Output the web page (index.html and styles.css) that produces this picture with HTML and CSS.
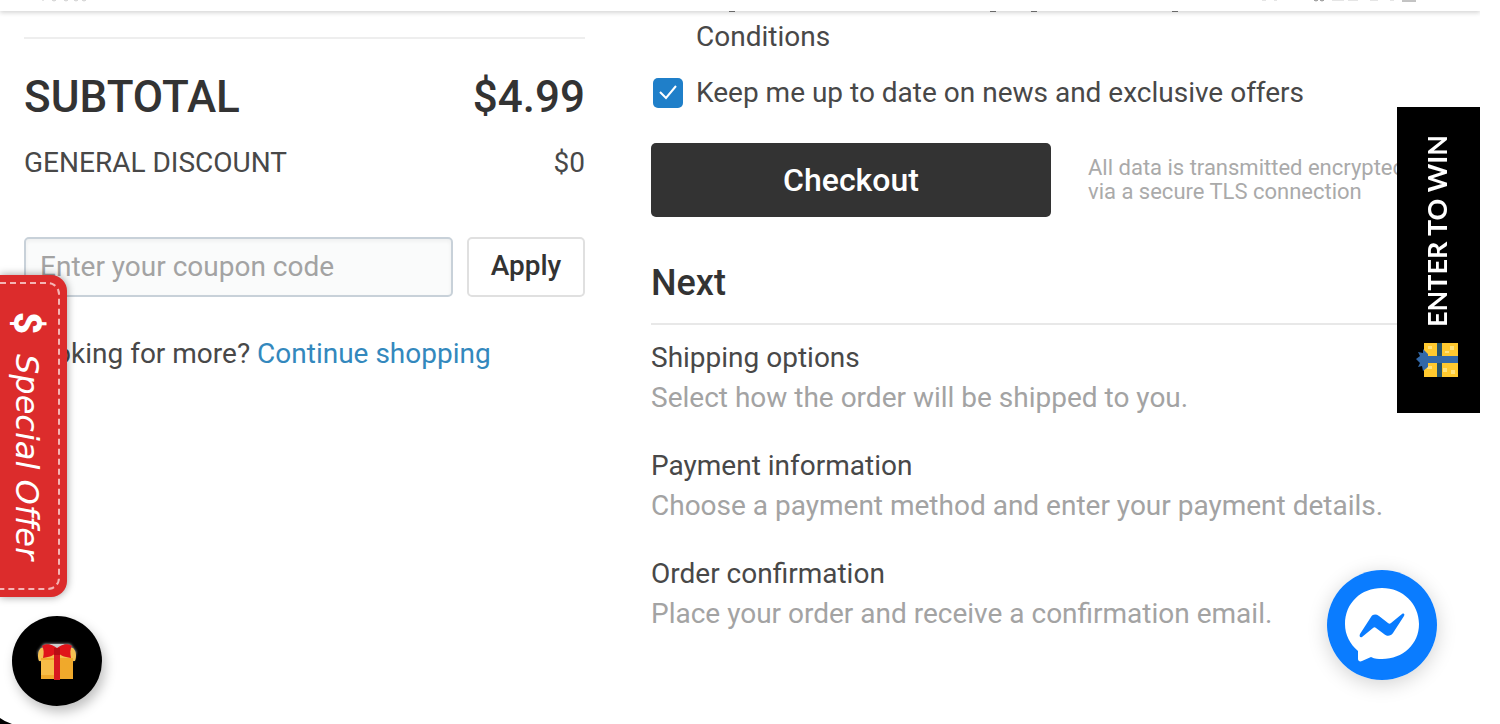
FILE: index.html
```
<!DOCTYPE html>
<html lang="en">
<head>
<meta charset="utf-8">
<meta name="viewport" content="width=device-width, initial-scale=1">
<title>Checkout</title>
<link rel="stylesheet" href="styles.css">
</head>
<body>
<header class="status-bar">
  <svg class="status-left" width="60" height="3" viewBox="0 0 60 3" aria-hidden="true"><path d="M2 0h2M12 0l2 1 2-1M24 0l2 1 2-1M34 0l2 1 2-1M42 0l2 1 2-1" fill="none" stroke="#ccc"/></svg>
  <svg class="status-right" width="196" height="3" viewBox="0 0 196 3" aria-hidden="true"><path d="M2 0h4M14 0h3M72 0h12M88 0h10M110 0h8M130 0h4" fill="none" stroke="#ccc"/><path d="M54 0l2 1 2-1M60 0l2 1 2-1M142 1h14" stroke="#888" fill="none"/></svg>
</header>
<main class="checkout">
  <section class="summary">
    <dl class="totals">
      <div class="total-row subtotal"><dt>SUBTOTAL</dt><dd>$4.99</dd></div>
      <div class="total-row"><dt>GENERAL DISCOUNT</dt><dd>$0</dd></div>
    </dl>
    <form class="coupon">
      <input class="coupon-input" type="text" placeholder="Enter your coupon code" aria-label="Coupon code">
      <button class="apply" type="button">Apply</button>
    </form>
    <p class="more">Looking for more? <a href="#">Continue shopping</a></p>
  </section>
  <section class="actions">
    <svg class="descenders" width="490" height="2" viewBox="0 0 490 2" aria-hidden="true"><path d="M33 0h6M294 0h6M335 0h6M476 0h6" stroke="#777" stroke-width="2" fill="none"/></svg>
    <p class="terms">Conditions</p>
    <label class="news"><input class="news-box" type="checkbox" checked><span>Keep me up to date on news and exclusive offers</span></label>
    <div class="submit">
      <button class="checkout-button" type="button">Checkout</button>
      <p class="secure">All data is transmitted encrypted via a secure TLS connection</p>
    </div>
    <h2 class="next">Next</h2>
    <ul class="steps">
      <li><h3>Shipping options</h3><p>Select how the order will be shipped to you.</p></li>
      <li><h3>Payment information</h3><p>Choose a payment method and enter your payment details.</p></li>
      <li><h3>Order confirmation</h3><p>Place your order and receive a confirmation email.</p></li>
    </ul>
  </section>
</main>
<button class="special" type="button"><span class="special-inner"><b class="dollar">$</b><span>Special Offer</span></span></button>
<button class="gift" type="button" aria-label="Rewards">
  <svg width="42" height="42" viewBox="0 0 42 42"><defs><filter id="soft" x="-30%" y="-30%" width="160%" height="160%"><feGaussianBlur stdDeviation="1.5"/></filter></defs>
  <path d="M8 4h26l6 8-3 9H5l-3-9z" fill="#eee" filter="url(#soft)" opacity=".8"/>
  <path d="M5 8h32c3 3 4 8 2 13H3C1 16 2 11 5 8z" fill="#f4c152"/><path d="M5 18h32v21H5z" fill="#f0a92b"/><path d="M5 20h15v15H5z" fill="#f8bd47"/><path d="M13 4h16l-8 5z" fill="#ccc"/>
  <path d="M18 9h6v31h-6z" fill="#d81920"/><path d="M21 8C16 4 10 3 6 6c2 3 2 7 1 12 7-1 12-3 14-7 2 4 7 6 14 7-1-5-1-9 1-12-4-3-10-2-15 2z" fill="#e0141a"/><path d="M18 8h6v7h-6z" fill="#b90e14"/></svg>
</button>
<button class="win" type="button">
  <span class="win-text">ENTER TO WIN</span>
  <svg width="42" height="34" viewBox="0 0 42 34" aria-hidden="true"><path d="M8 0h34v34H8z" fill="#ffc92f"/><path d="M12 3h4v3h-4zM11 23h5v3h-5zM27 25h4v4h-4zM34 3h4v4h-4zM29 8h4v2h-4zM35 27h4v4h-4z" fill="#ffe27c"/><path d="M21 0h5v34h-5z" fill="#28556b"/><path d="M9 13h33v7H9zM0 16l4-3-2-4 5 1V6l5 5v13l-5 4-1-5-4 1 2-4z" fill="#3268a8"/></svg>
</button>
<button class="messenger" type="button" aria-label="Messenger">
  <svg width="110" height="110" viewBox="0 0 110 110"><circle cx="55" cy="55" r="55" fill="#0a7cff"/><path d="M55 18c-21 0-37 15-37 36 0 11 5 20 13 27v8c0 2 2 3 4 2l9-4c4 2 7 2 11 2 21 0 37-15 37-35S76 18 55 18z" fill="#fff"/><path d="M33 64l11-17c2-3 5-3 8-1l9 7c1 1 2 1 3 0l11-9c2-1 3 0 2 2L66 63c-2 3-6 4-9 1l-8-6c-1-1-2-1-3 0l-11 9c-2 1-3-1-2-3z" fill="#0a7cff"/></svg>
</button>
<span class="corner"></span>
</body>
</html>
```
FILE: styles.css
```
* { box-sizing: border-box; }
body {
  margin: 0;
  padding-right: 20px;
  min-height: 100vh;
  position: relative;
  overflow: hidden;
  background: #fff;
  color: #484848;
  font: 28px/40px Roboto, "Liberation Sans", sans-serif;
}
h2, h3, p, dl, dd, ul { margin: 0; padding: 0; }
ul { list-style: none; }
button { font: inherit; cursor: pointer; }
.status-bar {
  display: flex;
  justify-content: space-between;
  height: 11px;
  padding: 0 24px 0 40px;
  box-shadow: 0 2px 4px rgba(0, 0, 0, .16);
  clip-path: inset(0 0 -12px 0);
}
.checkout {
  display: grid;
  grid-template-columns: 561fr 829fr;
  column-gap: 66px;
  padding-left: 24px;
}
.summary { padding-top: 26px; }
.totals { border-top: 2px solid #eee; padding-top: 32px; }
.total-row { display: flex; justify-content: space-between; }
.subtotal {
  font-size: 44px;
  line-height: 52px;
  font-weight: 500;
  color: #333;
  margin-bottom: 20px;
}
.coupon { display: flex; gap: 14px; margin-top: 54px; }
.coupon-input {
  flex: 1;
  min-width: 0;
  height: 60px;
  padding: 0 14px 2px;
  font: inherit;
  border: 2px solid #c8d1d9;
  border-radius: 5px;
  background: #fafbfb;
  box-shadow: inset 0 2px 4px rgba(0, 0, 0, .05);
}
.coupon-input::placeholder { color: #a3a3a3; opacity: 1; }
.apply {
  width: 118px;
  border: 2px solid #e0e0e0;
  border-radius: 5px;
  background: #fff;
  color: #333;
  font-weight: 500;
  padding: 0 0 2px;
}
.more { margin-top: 37px; }
.more a { color: #3388bd; text-decoration: none; }
.descenders { display: block; margin-left: 45px; }
.terms { margin: 4px 0 16px 45px; }
.news { display: flex; align-items: center; gap: 13px; margin-left: 2px; }
.news-box {
  appearance: none;
  width: 30px;
  height: 30px;
  margin: 0;
  border-radius: 5px;
  background: #1f7fc9 url("data:image/svg+xml,%3Csvg xmlns='http://www.w3.org/2000/svg' viewBox='0 0 30 30'%3E%3Cpath d='M7 14l6 6L23 8' fill='none' stroke='white' stroke-width='2'/%3E%3C/svg%3E") center / contain;
}
.submit { display: flex; align-items: center; gap: 37px; margin-top: 30px; }
.checkout-button {
  width: 400px;
  height: 74px;
  flex: none;
  border: 0;
  border-radius: 5px;
  background: #333;
  color: #fff;
  font-size: 32px;
  font-weight: 500;
}
.secure { width: 320px; font-size: 22px; line-height: 24px; color: #aaa; }
.next {
  margin-top: 44px;
  padding-bottom: 18px;
  border-bottom: 2px solid #e8e8e8;
  font-size: 36px;
  line-height: 44px;
  font-weight: 500;
  color: #333;
}
.steps { display: grid; gap: 28px; padding-top: 13px; }
.steps h3 { font-size: inherit; font-weight: 400; }
.steps p { color: #a3a3a3; }
.special {
  position: absolute;
  left: 0;
  top: 275px;
  padding: 7px 7px 7px 0;
  border: 0;
  border-radius: 0 16px 16px 0;
  background: #dc2c2c;
  color: #fff;
  box-shadow: 0 0 8px rgba(0, 0, 0, .4);
}
.special-inner {
  display: flex;
  align-items: center;
  gap: 20px;
  width: 60px;
  height: 308px;
  padding: 28px 4px 20px 0;
  border: 2px dashed #f5b5b5;
  border-left: 0;
  border-radius: 0 12px 12px 0;
  writing-mode: vertical-rl;
  font: italic 32px/52px "DejaVu Sans", sans-serif;
  font-variant-ligatures: none;
  white-space: nowrap;
}
.dollar { font: 900 38px/52px Roboto, sans-serif; }
.gift, .messenger { position: absolute; padding: 0; border: 0; border-radius: 50%; }
.gift {
  left: 12px;
  bottom: 18px;
  width: 90px;
  height: 90px;
  background: #000;
  box-shadow: 3px 6px 12px rgba(0, 0, 0, .25);
}
.gift svg { display: block; margin: 0 auto; }
.messenger {
  right: 63px;
  bottom: 44px;
  height: 110px;
  background: none;
  box-shadow: 0 4px 20px rgba(0, 0, 0, .18);
}
.messenger svg { display: block; }
.win {
  position: absolute;
  right: 20px;
  top: 107px;
  display: flex;
  flex-direction: column;
  align-items: center;
  gap: 16px;
  width: 83px;
  height: 306px;
  padding: 28px 4px 0 0;
  border: 0;
  background: #000;
  color: #fff;
}
.win-text {
  writing-mode: vertical-rl;
  transform: rotate(180deg);
  font: 700 27px/36px Lato, sans-serif;
}
.corner {
  position: absolute;
  left: 0;
  bottom: 0;
  width: 12px;
  height: 6px;
  background: #000;
  clip-path: polygon(0 0, 40% 50%, 100% 100%, 0 100%);
}
```
